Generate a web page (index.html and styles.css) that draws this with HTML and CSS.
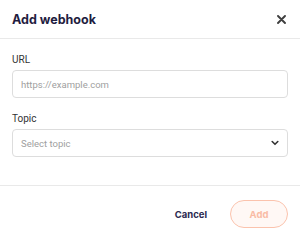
FILE: index.html
```html
<!DOCTYPE html>
<html lang="en">
<head>
    <meta charset="UTF-8">
    <meta name="viewport" content="width=device-width, initial-scale=1.0">
    <title>Add webhook</title>
    <link rel="stylesheet" href="styles.css">
</head>
<body>
    <div class="modal">
        <div class="modal-header">
            <h2 class="modal-title">Add webhook</h2>
            <a href="javascript:;" class="close-btn">
                <svg width="9" height="9" viewBox="0 0 9 9"><path d="M1 1L8 8M8 1L1 8" stroke="#3f3f3f" stroke-width="1.9" stroke-linecap="round"/></svg>
            </a>
        </div>
        <div class="modal-body">
            <div class="field">
                <label>URL</label>
                <input type="text" class="text-input" placeholder="https://example.com">
            </div>
            <div class="field field-topic">
                <label>Topic</label>
                <div class="select">
                    <span class="select-placeholder">Select topic</span>
                    <svg width="8" height="6" viewBox="0 0 8 6"><path d="M1.2 1.5L4 4.3L6.8 1.5" fill="none" stroke="#333" stroke-width="1.6" stroke-linecap="round" stroke-linejoin="round"/></svg>
                </div>
            </div>
        </div>
        <div class="modal-footer">
            <a href="javascript:;" class="btn-cancel">Cancel</a>
            <a href="javascript:;" class="btn-add">Add</a>
        </div>
    </div>
</body>
</html>
```

FILE: styles.css
```css
body{
    margin: 0;
    background: #ffffff;
    font-family: Roboto, "Liberation Sans", sans-serif;
}
a{
    text-decoration: none;
}
.modal{
    width: 300px;
    height: 239px;
    background: #ffffff;
}
.modal-header{
    height: 38px;
    display: flex;
    align-items: center;
    justify-content: space-between;
    padding: 0 14px 0 12px;
    border-bottom: 1px solid #e9e9e9;
}
.modal-title{
    margin: 0;
    font-family: Inter, sans-serif;
    font-size: 12.5px;
    font-weight: 700;
    color: #1f1d3f;
}
.close-btn{
    display: flex;
}
.modal-body{
    padding: 13px 12px 28px 12px;
}
.field label{
    display: block;
    font-size: 10px;
    line-height: 16px;
    color: #333333;
    margin-bottom: 2px;
}
.field-topic{
    margin-top: 13px;
}
.text-input{
    box-sizing: border-box;
    width: 100%;
    height: 28px;
    border: 1px solid #dddddd;
    border-radius: 4px;
    padding: 0 8px;
    font-family: Roboto, sans-serif;
    font-size: 9.5px;
    outline: none;
}
.text-input::placeholder{
    color: #a0a0a0;
}
.select{
    box-sizing: border-box;
    height: 28px;
    border: 1px solid #dddddd;
    border-radius: 4px;
    padding: 0 8px 0 8px;
    display: flex;
    align-items: center;
    justify-content: space-between;
}
.select-placeholder{
    font-size: 9.5px;
    color: #a0a0a0;
}
.modal-footer{
    border-top: 1px solid #e9e9e9;
    display: flex;
    align-items: center;
    justify-content: flex-end;
    gap: 23px;
    padding: 14px 12px;
}
.btn-cancel{
    font-family: Inter, sans-serif;
    font-size: 9.5px;
    font-weight: 700;
    color: #2b2950;
}
.btn-add{
    box-sizing: border-box;
    width: 58px;
    height: 28px;
    border: 1.5px solid #fbc3ad;
    border-radius: 14px;
    background: #fff8f5;
    display: flex;
    align-items: center;
    justify-content: center;
    font-family: Inter, sans-serif;
    font-size: 9.5px;
    font-weight: 700;
    color: #f9bca5;
}
```
